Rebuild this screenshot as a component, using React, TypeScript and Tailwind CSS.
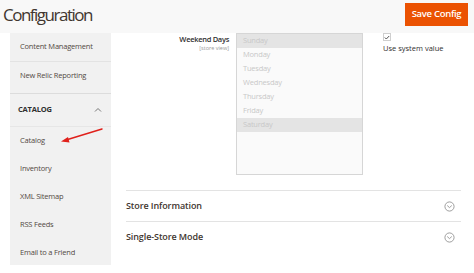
import React from 'react'

const DAYS = ['Sunday', 'Monday', 'Tuesday', 'Wednesday', 'Thursday', 'Friday', 'Saturday']
const SELECTED = ['Sunday', 'Saturday']

const CATALOG_ITEMS = ['Catalog', 'Inventory', 'XML Sitemap', 'RSS Feeds', 'Email to a Friend']

function CircleChevron() {
  return (
    <svg width="11" height="11" viewBox="0 0 12 12" fill="none" stroke="#8a8a8a" strokeWidth="0.9">
      <circle cx="6" cy="6" r="5" />
      <path d="M3.8 5.2 L6 7.2 L8.2 5.2" strokeLinecap="round" strokeLinejoin="round" />
    </svg>
  )
}

export default function App() {
  return (
    <div className="relative w-[474px] h-[273px] overflow-hidden bg-white font-['Open_Sans',sans-serif] text-[#303030]">
      {/* header */}
      <div className="h-[33px] bg-[#f8f8f8] flex items-center justify-between pl-[3px] pr-[6px]">
        <h1 className="text-[17px] tracking-[-1.5px] leading-none text-[#41362f] -mt-[4px]">Configuration</h1>
        <button className="h-[23px] w-[63px] bg-[#eb5202] text-white text-[9.5px] tracking-[-0.3px] font-semibold -mt-[4px]">
          Save Config
        </button>
      </div>

      <div className="flex">
        {/* sidebar */}
        <div className="ml-[10px] w-[101px] h-[232px] bg-[#f1f1f1] text-[7.5px] tracking-[-0.2px] text-[#514943]">
          <div className="h-[29px] flex items-center pl-[10px] border-b border-[#e3e3e3]">Content Management</div>
          <div className="h-[32px] flex items-center pl-[10px] border-b border-[#dcdcdc] pb-[4px]">New Relic Reporting</div>
          <div className="h-[33px] flex items-center justify-between pl-[8px] pr-[9px] border-b border-[#e6e6e6]">
            <span className="font-bold text-[7.5px] text-[#303030]">CATALOG</span>
            <svg width="8" height="6" viewBox="0 0 8 6" fill="none" stroke="#777" strokeWidth="1">
              <path d="M1 4.5 L4 1.5 L7 4.5" />
            </svg>
          </div>
          {CATALOG_ITEMS.map((item) => (
            <div key={item} className="h-[28px] flex items-center pl-[10px]">{item}</div>
          ))}
        </div>

        {/* main */}
        <div className="flex-1 pl-[15px] pr-[13px]">
          <div className="flex">
            <div className="w-[103px] text-right pt-[1px]">
              <div className="text-[7.5px] tracking-[-0.3px] font-semibold leading-[10px] text-[#303030]">Weekend Days</div>
              <div className="text-[5.5px] leading-[8px] text-[#999]">[store view]</div>
            </div>
            <div className="ml-[7px] w-[127px] h-[142px] border border-[#d6d6d6] bg-[#fafafa] text-[7.5px] tracking-[-0.2px] text-[#c8c8c8]">
              {DAYS.map((d) => (
                <div
                  key={d}
                  className={`h-[14px] flex items-center pl-[6px] ${SELECTED.includes(d) ? 'bg-[#e4e4e4]' : ''}`}
                >
                  {d}
                </div>
              ))}
            </div>
            <div className="ml-[20px]">
              <div className="w-[8px] h-[8px] border border-[#cfcfcf] bg-white flex items-center justify-center">
                <svg width="6" height="5" viewBox="0 0 6 5" fill="none" stroke="#555" strokeWidth="1">
                  <path d="M0.8 2.5 L2.3 4 L5.2 1" />
                </svg>
              </div>
              <div className="text-[7.5px] leading-[10px] mt-[2px] text-[#303030]">Use system value</div>
            </div>
          </div>

          <div className="mt-[15px]">
            <div className="h-[31px] border-t border-[#e3e3e3] flex items-center justify-between pr-[6px]">
              <span className="text-[9px] font-semibold tracking-[-0.1px] text-[#41362f]">Store Information</span>
              <CircleChevron />
            </div>
            <div className="h-[31px] border-t border-[#e3e3e3] flex items-center justify-between pr-[6px]">
              <span className="text-[9px] font-semibold tracking-[-0.1px] text-[#41362f]">Single-Store Mode</span>
              <CircleChevron />
            </div>
          </div>
        </div>
      </div>

      {/* red annotation arrow */}
      <svg className="absolute left-0 top-0" width="474" height="273" viewBox="0 0 474 273" fill="none">
        <path d="M102 129 L66 140" stroke="#e0201b" strokeWidth="1.5" strokeLinecap="round" />
        <path d="M61 141.5 L68 137 L69.5 142.5 Z" fill="#e0201b" />
      </svg>
    </div>
  )
}
